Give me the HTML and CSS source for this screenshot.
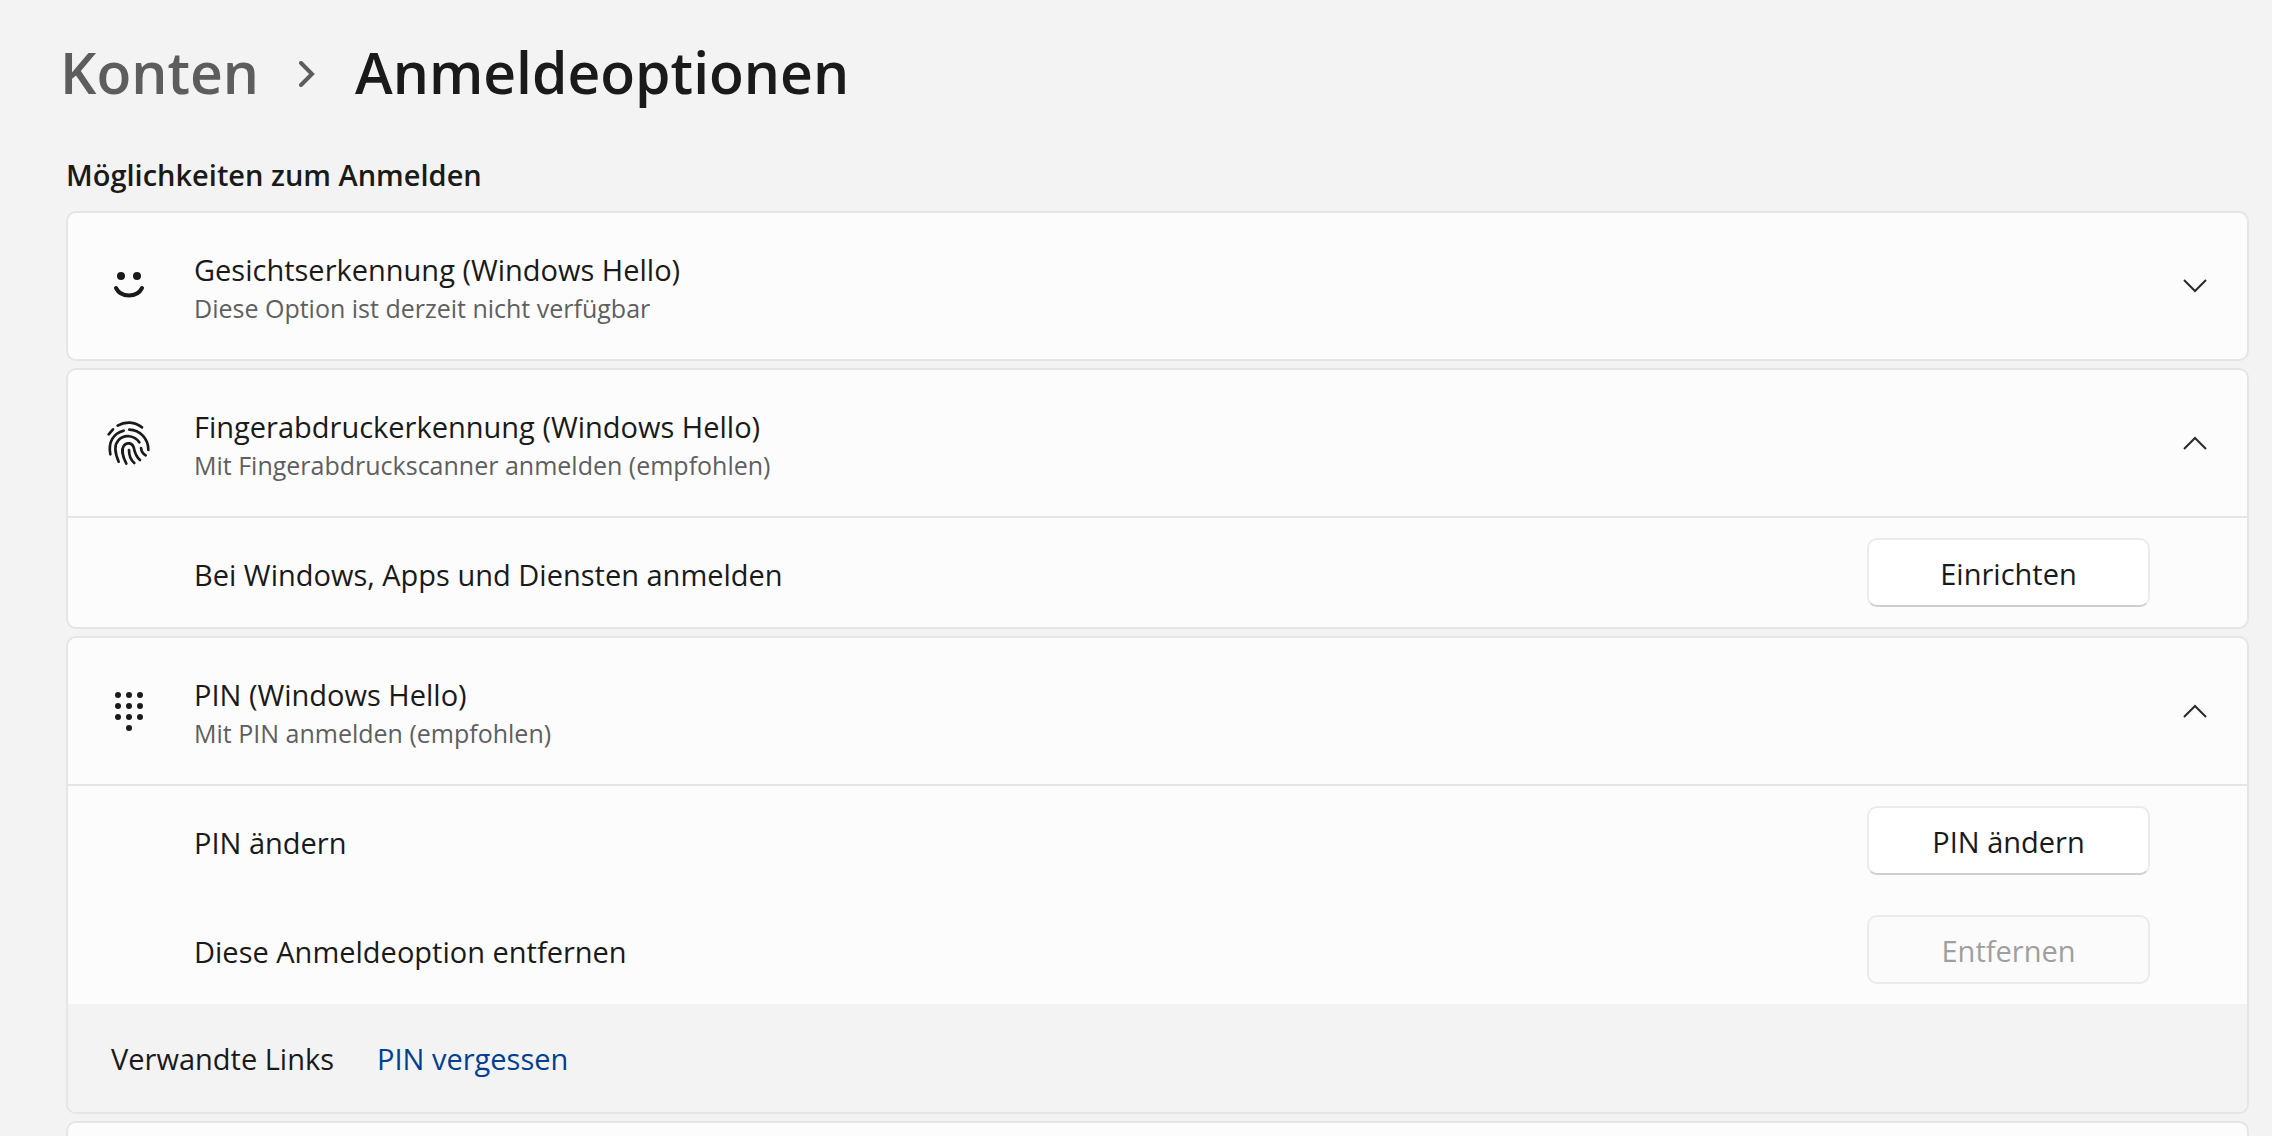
FILE: index.html
```html
<!DOCTYPE html>
<html lang="de">
<head>
  <meta charset="UTF-8">
  <meta name="viewport" content="width=device-width, initial-scale=1.0">
  <title>Anmeldeoptionen</title>
  <link rel="stylesheet" href="styles.css">
</head>
<body>

  <main class="page">

    <!-- Brotkrumen -->
    <nav class="breadcrumb">
      <a href="#">Konten</a>
      <svg class="separator" viewBox="0 0 16 26" aria-hidden="true"><path d="M2 2 L13 13 L2 24"/></svg>
      <h1>Anmeldeoptionen</h1>
    </nav>

    <h2>Möglichkeiten zum Anmelden</h2>

    <div class="card-list">

      <!-- Gesichtserkennung -->
      <section class="card">
        <button class="card-header" type="button" aria-expanded="false">
          <svg class="icon" viewBox="0 0 48 48" aria-hidden="true">
            <circle class="fill" cx="16" cy="14" r="4"/>
            <circle class="fill" cx="32" cy="14" r="4"/>
            <path class="smile" d="M11 26 C16 36 32 36 37 26"/>
          </svg>
          <span class="card-text">
            <span class="card-title">Gesichtserkennung (Windows Hello)</span>
            <span class="card-subtitle">Diese Option ist derzeit nicht verfügbar</span>
          </span>
          <svg class="chevron" viewBox="0 0 26 16" aria-hidden="true"><path d="M2 2 L13 13 L24 2"/></svg>
        </button>
      </section>

      <!-- Fingerabdruck -->
      <section class="card">
        <button class="card-header" type="button" aria-expanded="true">
          <svg class="icon" viewBox="46 56 144 144" aria-hidden="true">
            <g class="print">
              <path d="M84 76 C107 62 135 64 157 81"/>
              <path d="M57 102 L70 87"/>
              <path d="M62 162 C55 125 71 99 102 91"/>
              <path d="M119 88 C151 89 176 115 176 149"/>
              <path d="M87 184 C78 163 72 135 86 120 C103 101 134 104 149 126"/>
              <path d="M110 190 C99 169 95 147 102 137 C111 124 128 128 132 141 C135 156 138 169 151 179"/>
              <path d="M118 149 C118 166 122 178 134 188"/>
              <path d="M154 143 C155 153 159 160 168 165"/>
            </g>
          </svg>
          <span class="card-text">
            <span class="card-title">Fingerabdruckerkennung (Windows Hello)</span>
            <span class="card-subtitle">Mit Fingerabdruckscanner anmelden (empfohlen)</span>
          </span>
          <svg class="chevron" viewBox="0 0 26 16" aria-hidden="true"><path d="M2 14 L13 3 L24 14"/></svg>
        </button>
        <div class="card-body">
          <div class="row">
            <span>Bei Windows, Apps und Diensten anmelden</span>
            <button class="btn" type="button">Einrichten</button>
          </div>
        </div>
      </section>

      <!-- PIN -->
      <section class="card">
        <button class="card-header" type="button" aria-expanded="true">
          <svg class="icon" viewBox="0 0 48 48" aria-hidden="true">
            <g class="fill">
              <circle cx="13" cy="8" r="3"/><circle cx="24" cy="8" r="3"/><circle cx="35" cy="8" r="3"/>
              <circle cx="13" cy="19" r="3"/><circle cx="24" cy="19" r="3"/><circle cx="35" cy="19" r="3"/>
              <circle cx="13" cy="30" r="3"/><circle cx="24" cy="30" r="3"/><circle cx="35" cy="30" r="3"/>
              <circle cx="24" cy="41" r="3"/>
            </g>
          </svg>
          <span class="card-text">
            <span class="card-title">PIN (Windows Hello)</span>
            <span class="card-subtitle">Mit PIN anmelden (empfohlen)</span>
          </span>
          <svg class="chevron" viewBox="0 0 26 16" aria-hidden="true"><path d="M2 14 L13 3 L24 14"/></svg>
        </button>
        <div class="card-body">
          <div class="row">
            <span>PIN ändern</span>
            <button class="btn" type="button">PIN ändern</button>
          </div>
          <div class="row">
            <span>Diese Anmeldeoption entfernen</span>
            <button class="btn" type="button" disabled>Entfernen</button>
          </div>
        </div>
        <div class="related">
          <span>Verwandte Links</span>
          <a href="#">PIN vergessen</a>
        </div>
      </section>

      <section class="card card-next"></section>

    </div>
  </main>

</body>
</html>
```
FILE: styles.css
```css
* {
  box-sizing: border-box;
}
body {
  margin: 0;
  background-color: #f3f3f3;
  color: #1a1a1a;
  font-family: "Segoe UI", "Open Sans", "Noto Sans", sans-serif;
  font-size: 29px;
  line-height: 40px;
}
.page {
  display: flex;
  flex-direction: column;
  min-height: 100vh;
  padding: 32px 23px 0 66px;
}
/* Brotkrumen */
.breadcrumb {
  display: flex;
  align-items: center;
  margin-left: -6px;
  font-size: 57px;
  font-weight: 600;
  line-height: 80px;
}
.breadcrumb a {
  color: #5d5d5d;
  text-decoration: none;
}
.breadcrumb h1 {
  margin: 0;
  font-size: inherit;
  font-weight: inherit;
}
.separator {
  width: 16px;
  height: 26px;
  margin: 4px 40px 0;
  fill: none;
  stroke: #5d5d5d;
  stroke-width: 4;
  stroke-linecap: round;
}
h2 {
  margin: 43px 0 16px;
  font-size: 29px;
  font-weight: 600;
  line-height: 40px;
}
/* Karten */
.card-list {
  flex: 1;
  display: flex;
  flex-direction: column;
  gap: 7px;
}
.card {
  border: 2px solid #e5e5e5;
  border-radius: 10px;
  background-color: #fcfcfc;
  overflow: hidden;
  flex-shrink: 0;
}
.card-next {
  flex: 1;
  border-bottom: none;
  border-radius: 10px 10px 0 0;
}
.card-header {
  display: flex;
  align-items: center;
  width: 100%;
  height: 146px;
  padding: 0 39px 0 37px;
  border: none;
  background: none;
  color: inherit;
  font: inherit;
  text-align: left;
  cursor: pointer;
}
.icon {
  width: 48px;
  height: 48px;
  margin-right: 41px;
}
.fill {
  fill: #1a1a1a;
}
.smile {
  fill: none;
  stroke: #1a1a1a;
  stroke-width: 4;
  stroke-linecap: round;
}
.print {
  fill: none;
  stroke: #1a1a1a;
  stroke-width: 8;
  stroke-linecap: round;
}
.card-text {
  flex: 1;
  display: flex;
  flex-direction: column;
  padding-top: 4px;
}
.card-title {
  line-height: 40px;
}
.card-subtitle {
  color: #5f5f5f;
  font-size: 25px;
  line-height: 36px;
}
.chevron {
  width: 26px;
  height: 16px;
  fill: none;
  stroke: #2a2a2a;
  stroke-width: 2;
}
.card-body {
  border-top: 2px solid #e5e5e5;
}
.row {
  display: flex;
  align-items: center;
  justify-content: space-between;
  padding: 20px 97px 20px 126px;
}
.row span {
  padding-top: 4px;
}
.btn {
  width: 283px;
  height: 69px;
  padding: 2px 0 0;
  border: 2px solid #ebebeb;
  border-bottom-color: #cfcfcf;
  border-radius: 10px;
  background-color: #fff;
  color: #1a1a1a;
  font: inherit;
  cursor: pointer;
}
.btn:disabled {
  border-color: #ebebeb;
  background-color: #fbfbfb;
  color: #9f9f9f;
  cursor: default;
}
/* Verwandte Links */
.related {
  display: flex;
  align-items: center;
  gap: 43px;
  height: 108px;
  padding: 2px 43px 0;
  background-color: #f3f3f3;
}
.related a {
  color: #003e92;
  text-decoration: none;
}
```
